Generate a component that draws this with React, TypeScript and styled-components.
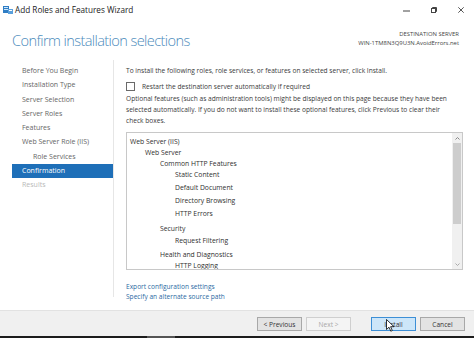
import styled, { createGlobalStyle } from "styled-components";

const GlobalStyle = createGlobalStyle`
  html, body {
    margin: 0;
    padding: 0;
    background: #ffffff;
  }
  body {
    font-family: "Open Sans", "Noto Sans", "Liberation Sans", sans-serif;
  }
`;

const navItems = [
  { label: "Before You Begin", indent: 0 },
  { label: "Installation Type", indent: 0 },
  { label: "Server Selection", indent: 0 },
  { label: "Server Roles", indent: 0 },
  { label: "Features", indent: 0 },
  { label: "Web Server Role (IIS)", indent: 0 },
  { label: "Role Services", indent: 1 },
  { label: "Confirmation", indent: 0, active: true },
  { label: "Results", indent: 0, disabled: true },
];

const treeItems = [
  { label: "Web Server (IIS)", level: 0, gap: 0 },
  { label: "Web Server", level: 1, gap: 0 },
  { label: "Common HTTP Features", level: 2, gap: 0 },
  { label: "Static Content", level: 3, gap: 0 },
  { label: "Default Document", level: 3, gap: 2 },
  { label: "Directory Browsing", level: 3, gap: 2 },
  { label: "HTTP Errors", level: 3, gap: 2 },
  { label: "Security", level: 2, gap: 4 },
  { label: "Request Filtering", level: 3, gap: 1 },
  { label: "Health and Diagnostics", level: 2, gap: 3 },
  { label: "HTTP Logging", level: 3, gap: 0 },
];

const optionalLines = [
  "Optional features (such as administration tools) might be displayed on this page because they have been",
  "selected automatically. If you do not want to install these optional features, click Previous to clear their",
  "check boxes.",
];

const App = () => {
  return (
    <>
      <GlobalStyle />
      <Window>
        <TitleBar>
          <TitleLeft>
            <svg width="10" height="9" viewBox="0 0 10 9">
              <rect x="0" y="1" width="6" height="7" fill="#2f7dc4" />
              <rect x="1" y="2" width="4" height="1" fill="#cfe6fa" />
              <rect x="1" y="4" width="4" height="1" fill="#cfe6fa" />
              <rect x="5" y="4" width="5" height="5" fill="#5aa0dc" />
              <rect x="6" y="5" width="3" height="1" fill="#ffffff" />
            </svg>
            <WindowTitle>Add Roles and Features Wizard</WindowTitle>
          </TitleLeft>
          <Controls>
            <svg width="7" height="7" viewBox="0 0 7 7">
              <line x1="0" y1="4" x2="7" y2="4" stroke="#444" strokeWidth="1" />
            </svg>
            <svg width="6" height="6" viewBox="0 0 6 6">
              <rect x="0.5" y="1.5" width="4" height="4" fill="none" stroke="#444" />
              <path d="M1.5 1.5V0.5H5.5V4.5H4.5" fill="none" stroke="#444" />
            </svg>
            <svg width="6" height="6" viewBox="0 0 6 6">
              <path d="M0.3 0.3L5.7 5.7M5.7 0.3L0.3 5.7" stroke="#444" strokeWidth="0.9" />
            </svg>
          </Controls>
        </TitleBar>

        <Header>
          <PageTitle>Confirm installation selections</PageTitle>
          <Destination>
            <div>DESTINATION SERVER</div>
            <div>WIN-1TM8N3Q9U3N.AvoidErrors.net</div>
          </Destination>
        </Header>

        <Body>
          <Nav>
            {navItems.map((item) => (
              <NavItem
                key={item.label}
                $indent={item.indent}
                $active={!!item.active}
                $disabled={!!item.disabled}
              >
                {item.label}
              </NavItem>
            ))}
          </Nav>

          <Content>
            <Intro>
              To install the following roles, role services, or features on selected server, click Install.
            </Intro>
            <CheckRow>
              <CheckBox />
              <span>Restart the destination server automatically if required</span>
            </CheckRow>
            <Paragraph>
              {optionalLines.map((line) => (
                <div key={line}>{line}</div>
              ))}
            </Paragraph>

            <ListBox>
              <TreeList>
                {treeItems.map((item) => (
                  <TreeItem key={item.label} $level={item.level} $gap={item.gap}>
                    {item.label}
                  </TreeItem>
                ))}
              </TreeList>
              <ScrollBar>
                <Arrow>
                  <svg width="5" height="3" viewBox="0 0 5 3">
                    <path d="M0.5 2.5L2.5 0.5L4.5 2.5" fill="none" stroke="#888" />
                  </svg>
                </Arrow>
                <Track>
                  <Thumb />
                </Track>
                <Arrow>
                  <svg width="5" height="3" viewBox="0 0 5 3">
                    <path d="M0.5 0.5L2.5 2.5L4.5 0.5" fill="none" stroke="#aaa" />
                  </svg>
                </Arrow>
              </ScrollBar>
            </ListBox>

            <Links>
              <Link>Export configuration settings</Link>
              <Link>Specify an alternate source path</Link>
            </Links>
          </Content>
        </Body>

        <Footer>
          <ButtonGroup>
            <Button>&lt; Previous</Button>
            <Button $variant="disabled">Next &gt;</Button>
          </ButtonGroup>
          <ButtonGroup>
            <Button $variant="focus">
              Install
              <Cursor width="9" height="13" viewBox="0 0 9 13">
                <path d="M0.5 0.5V10.5L3 8.2L4.8 12.2L6.3 11.5L4.6 7.7H8L0.5 0.5Z" fill="#fff" stroke="#000" strokeWidth="0.8" />
              </Cursor>
            </Button>
            <Button>Cancel</Button>
          </ButtonGroup>
        </Footer>
        <Taskbar>
          <TaskItem />
        </Taskbar>
      </Window>
    </>
  );
};

export default App;

const Window = styled.div`
  width: 474px;
  height: 338px;
  display: flex;
  flex-direction: column;
  background: #ffffff;
  color: #3a3a3a;
  overflow: hidden;
`;

const TitleBar = styled.div`
  height: 19px;
  display: flex;
  align-items: center;
  justify-content: space-between;
  padding: 0 10px 0 3px;
`;

const TitleLeft = styled.div`
  display: flex;
  align-items: center;
  gap: 2px;
`;

const WindowTitle = styled.div`
  font-size: 8.2px;
  color: #222;
`;

const Controls = styled.div`
  display: flex;
  align-items: center;
  gap: 21px;
  padding-top: 1px;
`;

const Header = styled.div`
  height: 41px;
  display: flex;
  justify-content: space-between;
  align-items: flex-start;
  padding: 0 15px 0 12px;
`;

const PageTitle = styled.div`
  font-size: 14.6px;
  font-weight: 300;
  letter-spacing: -0.6px;
  color: #4a8abb;
  margin-top: 11px;
`;

const Destination = styled.div`
  text-align: right;
  margin-top: 11px;
  font-size: 5.9px;
  color: #444;
  line-height: 9px;
`;

const Body = styled.div`
  flex: 1;
  display: flex;
`;

const Nav = styled.div`
  width: 114px;
  padding: 4px 0 0 12px;
  box-sizing: border-box;
  border-right: 1px solid #e6e6e6;
  margin-bottom: 13px;
`;

const NavItem = styled.div<{ $indent: number; $active: boolean; $disabled: boolean }>`
  height: 14.3px;
  line-height: 14.3px;
  font-size: 7px;
  padding-left: ${(p) => 10 + p.$indent * 11}px;
  background: ${(p) => (p.$active ? "#1e6fb8" : "transparent")};
  color: ${(p) => (p.$active ? "#ffffff" : p.$disabled ? "#b8b8b8" : "#666")};
  width: 101px;
  box-sizing: border-box;
  white-space: nowrap;
`;

const Content = styled.div`
  flex: 1;
  padding: 5px 11px 0 12px;
  font-size: 6.6px;
  color: #3a3a3a;
`;

const Intro = styled.div`
  line-height: 11px;
`;

const CheckRow = styled.div`
  display: flex;
  align-items: center;
  gap: 7px;
  margin-top: 5px;
  height: 10px;
`;

const CheckBox = styled.div`
  width: 7px;
  height: 7px;
  border: 1px solid #6a6a6a;
  background: #fff;
`;

const Paragraph = styled.div`
  margin-top: 3px;
  line-height: 10.8px;
  white-space: nowrap;
`;

const ListBox = styled.div`
  margin-top: 6px;
  height: 138px;
  border: 1px solid #c8c8c8;
  display: flex;
  box-sizing: border-box;
`;

const TreeList = styled.div`
  flex: 1;
  padding: 3px 0 0 3px;
  overflow: hidden;
`;

const TreeItem = styled.div<{ $level: number; $gap: number }>`
  padding-left: ${(p) => p.$level * 15}px;
  margin-top: ${(p) => p.$gap}px;
  line-height: 11px;
  font-size: 6.8px;
  color: #2f2f2f;
  white-space: nowrap;
`;

const ScrollBar = styled.div`
  width: 10px;
  display: flex;
  flex-direction: column;
  background: #f0f0f0;
`;

const Arrow = styled.div`
  height: 10px;
  display: flex;
  align-items: center;
  justify-content: center;
`;

const Track = styled.div`
  flex: 1;
  padding: 0 1px;
`;

const Thumb = styled.div`
  height: 81px;
  background: #cdcdcd;
`;

const Links = styled.div`
  margin-top: 12px;
  display: flex;
  flex-direction: column;
`;

const Link = styled.div`
  color: #2b6aa3;
  font-size: 6.6px;
  line-height: 10px;
`;

const Footer = styled.div`
  height: 26px;
  box-sizing: border-box;
  background: #f0f0f0;
  border-top: 1px solid #e2e2e2;
  display: flex;
  justify-content: flex-end;
  align-items: flex-start;
  gap: 20px;
  padding: 6px 9px 0 0;
`;

const ButtonGroup = styled.div`
  display: flex;
  gap: 4px;
`;

const Button = styled.div<{ $variant?: "disabled" | "focus" }>`
  position: relative;
  width: 45px;
  height: 14px;
  box-sizing: border-box;
  display: flex;
  align-items: center;
  justify-content: center;
  font-size: 6.6px;
  border: 1px solid
    ${(p) => (p.$variant === "focus" ? "#3d8fd6" : p.$variant === "disabled" ? "#cfcfcf" : "#a8a8a8")};
  background: ${(p) => (p.$variant === "focus" ? "#cde6f9" : p.$variant === "disabled" ? "#f4f4f4" : "#e3e3e3")};
  color: ${(p) => (p.$variant === "disabled" ? "#a8a8a8" : "#333")};
`;

const Cursor = styled.svg`
  position: absolute;
  left: 14px;
  top: 1px;
`;

const Taskbar = styled.div`
  height: 2px;
  background: #1c1c1c;
  padding-left: 147px;
`;

const TaskItem = styled.div`
  width: 28px;
  height: 2px;
  background: #555;
`;
